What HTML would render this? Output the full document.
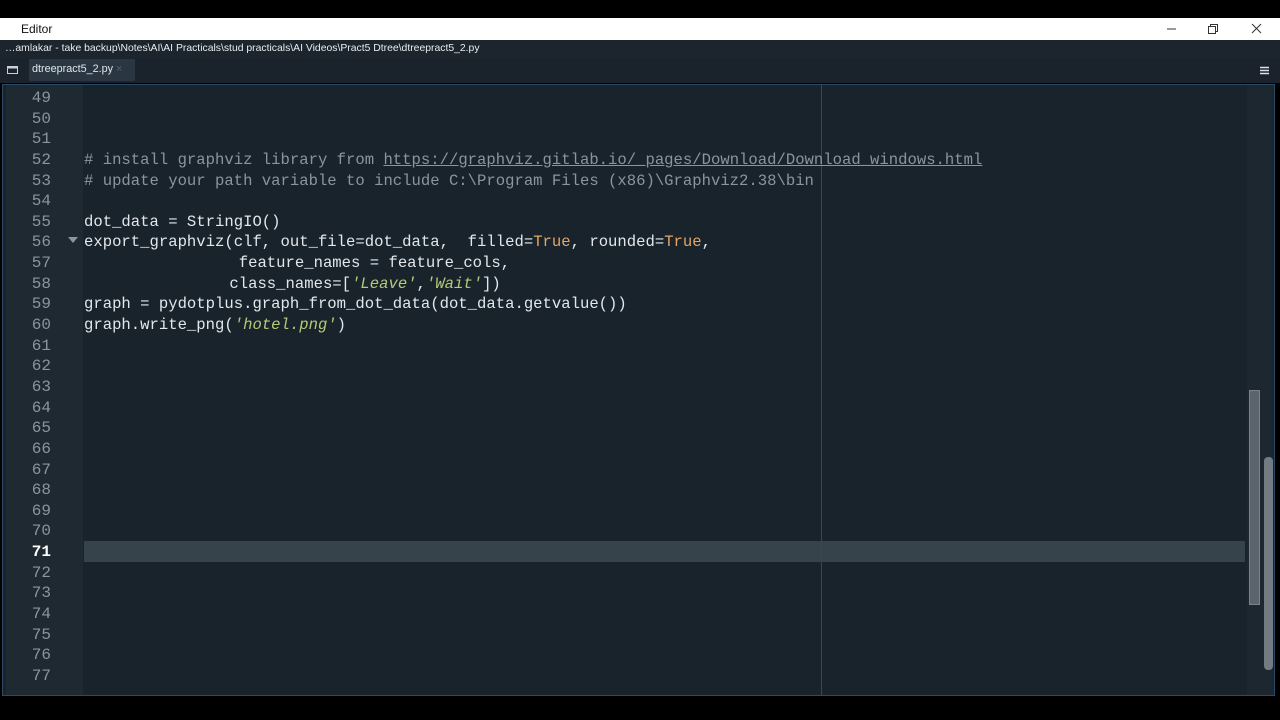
<!DOCTYPE html>
<html><head><style>
body{margin:0;width:1280px;height:720px;background:#000;position:relative;overflow:hidden;font-family:"Liberation Sans",sans-serif}
.title{position:absolute;top:18px;left:0;width:1280px;height:22px;background:#fff;font-size:12px;color:#111}
.title span{position:absolute;left:21px;top:4px}
.path{position:absolute;top:40px;left:0;width:1280px;height:18px;background:#1c252d;color:#e8ecef;font-size:10.4px;line-height:18px;padding-left:5px;box-sizing:border-box}
.tabbar{position:absolute;top:58px;left:0;width:1280px;height:25px;background:#1a232b}
.tab{position:absolute;left:29px;top:1px;width:106px;height:22px;background:#2a3742;color:#dfe5ea;font-size:10.8px;line-height:20px;padding-left:3px;box-sizing:border-box}
.panel{position:absolute;top:84px;left:2px;width:1273px;height:612px;border:1px solid #2b4a66;background:#19232b;box-sizing:border-box}
.gutter{position:absolute;left:3px;top:0;width:77px;height:610px;background:#1e2931}
.code{position:absolute;left:0;top:3px;font-family:"Liberation Mono",monospace;font-size:15.6px;line-height:20.64px;color:#e2e7eb;white-space:pre}
.ln{position:absolute;left:0;width:48px;text-align:right;color:#8b959c;font-size:16px}
.c{color:#8c959c}.t{color:#e5a565}.s{color:#b5c97a;font-style:italic}
</style></head><body>
<div class="title"><span>Editor</span>
<svg style="position:absolute;left:1160px;top:0" width="110" height="22"><line x1="7" y1="11" x2="16" y2="11" stroke="#333"/><rect x="48.5" y="8.5" width="7" height="7" fill="none" stroke="#333"/><path d="M50.5 8.5V6.5H57.5V13.5H55.5" fill="none" stroke="#333"/><path d="M92 6L101 15M101 6L92 15" stroke="#333"/></svg></div>
<div class="path">…amlakar - take backup\Notes\AI\AI Practicals\stud practicals\AI Videos\Pract5 Dtree\dtreepract5_2.py</div>
<div class="tabbar">
<svg style="position:absolute;left:7px;top:7px" width="12" height="10"><rect x="0.5" y="1.5" width="10" height="7" fill="none" stroke="#ccd" /><rect x="0.5" y="1.5" width="10" height="2" fill="#ccd"/></svg>
<div class="tab">dtreepract5_2.py <span style="color:#55626c">×</span></div>
<svg style="position:absolute;left:1259px;top:8px" width="12" height="10"><path d="M1 1.5H10M1 4.5H10M1 7.5H10" stroke="#dde" stroke-width="1.5"/></svg>
</div>
<div class="panel">
<div class="gutter"></div>
<div style="position:absolute;left:81px;top:456px;width:1161px;height:21px;background:#37434b"></div>
<div style="position:absolute;left:818px;top:0;width:1px;height:610px;background:#3a4650"></div>
<div style="position:absolute;left:1244px;top:0;width:26px;height:610px;background:#1d272f"></div>
<div style="position:absolute;left:1246px;top:305px;width:11px;height:215px;background:#5b646c;border:1px solid #7a838a;box-sizing:border-box"></div>
<div style="position:absolute;left:1261px;top:372px;width:9px;height:213px;background:#737b82;border-radius:4px"></div>
<div style="position:absolute;left:65px;top:152px;width:0;height:0;border-left:5px solid transparent;border-right:5px solid transparent;border-top:6px solid #8b959c"></div>
<div class="code" style="left:0">
<span class="ln" style="top:0">49</span><span class="ln" style="top:20.64px">50</span><span class="ln" style="top:41.28px">51</span><span class="ln" style="top:61.92px">52</span><span class="ln" style="top:82.56px">53</span><span class="ln" style="top:103.2px">54</span><span class="ln" style="top:123.84px">55</span><span class="ln" style="top:144.48px">56</span><span class="ln" style="top:165.12px">57</span><span class="ln" style="top:185.76px">58</span><span class="ln" style="top:206.4px">59</span><span class="ln" style="top:227.04px">60</span><span class="ln" style="top:247.68px">61</span><span class="ln" style="top:268.32px">62</span><span class="ln" style="top:288.96px">63</span><span class="ln" style="top:309.6px">64</span><span class="ln" style="top:330.24px">65</span><span class="ln" style="top:350.88px">66</span><span class="ln" style="top:371.52px">67</span><span class="ln" style="top:392.16px">68</span><span class="ln" style="top:412.8px">69</span><span class="ln" style="top:433.44px">70</span><span class="ln" style="top:454.08px;color:#fff;font-weight:bold">71</span><span class="ln" style="top:474.72px">72</span><span class="ln" style="top:495.36px">73</span><span class="ln" style="top:516px">74</span><span class="ln" style="top:536.64px">75</span><span class="ln" style="top:557.28px">76</span><span class="ln" style="top:577.92px">77</span>
</div>
<div class="code" style="left:81px">


<span class="c"># install graphviz library from <u>https://graphviz.gitlab.io/_pages/Download/Download_windows.html</u></span>
<span class="c"># update your path variable to include C:\Program Files (x86)\Graphviz2.38\bin</span>

dot_data = StringIO()
export_graphviz(clf, out_file=dot_data,  filled=<span class="t">True</span>, rounded=<span class="t">True</span>,
                <span style="margin-left:5px">feature_names = feature_cols,</span>
               <span style="margin-left:5px">class_names=[<span class="s">'Leave'</span>,<span class="s">'Wait'</span>])</span>
graph = pydotplus.graph_from_dot_data(dot_data.getvalue())
graph.write_png(<span class="s">'hotel.png'</span>)</div>
</div>
</body></html>
